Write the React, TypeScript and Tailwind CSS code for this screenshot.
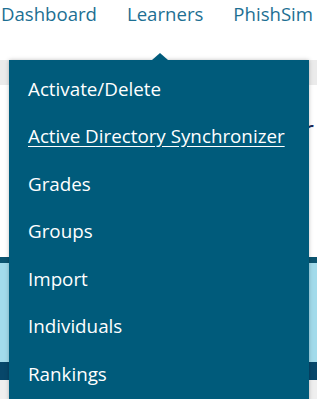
import React from "react";

const items = [
  "Activate/Delete",
  "Active Directory Synchronizer",
  "Grades",
  "Groups",
  "Import",
  "Individuals",
  "Rankings",
];

export default function App() {
  return (
    <div
      className="relative w-[317px] h-[399px] overflow-hidden bg-white"
      style={{ fontFamily: '"Open Sans", sans-serif' }}
    >
      <nav className="h-[60px] flex items-start pt-[2px] text-[18.6px] leading-[24px] text-[#1d6f93] whitespace-nowrap">
        <span className="pl-[1px] pr-[15px]">Dashboard</span>
        <span className="px-[15px]">Learners</span>
        <span className="px-[15px]">PhishSim</span>
      </nav>
      <div className="h-[25px] bg-[#ebebeb]" />
      <div className="h-[172px] flex justify-end items-start pt-[28px] pr-[3px]">
        <h1 className="text-[28px] leading-[32px] text-[#1c2b5a] whitespace-nowrap">Learner</h1>
      </div>
      <div className="h-[6px] bg-[#0b5470]" />
      <div className="h-[99px] bg-[#a2dbeb]" />
      <div className="h-[18px] bg-[#07476a]" />
      <div className="h-[40px] bg-[#efefef]" />

      <div className="absolute left-[9px] top-[60px] w-[300px] h-[360px] bg-[#005b7b] pt-[5px] shadow-[0_0_4px_rgba(0,0,0,0.25)]">
        <div className="absolute -top-[7px] left-[143px] w-0 h-0 border-l-[8px] border-r-[8px] border-b-[7px] border-l-transparent border-r-transparent border-b-[#005b7b]" />
        {items.map((t, i) => (
          <div
            key={t}
            className={`h-[47.5px] flex items-center pl-[19px] text-[18.8px] leading-[26px] text-white whitespace-nowrap ${
              i === 1 ? "underline underline-offset-[3px]" : ""
            }`}
          >
            {t}
          </div>
        ))}
      </div>
    </div>
  );
}
